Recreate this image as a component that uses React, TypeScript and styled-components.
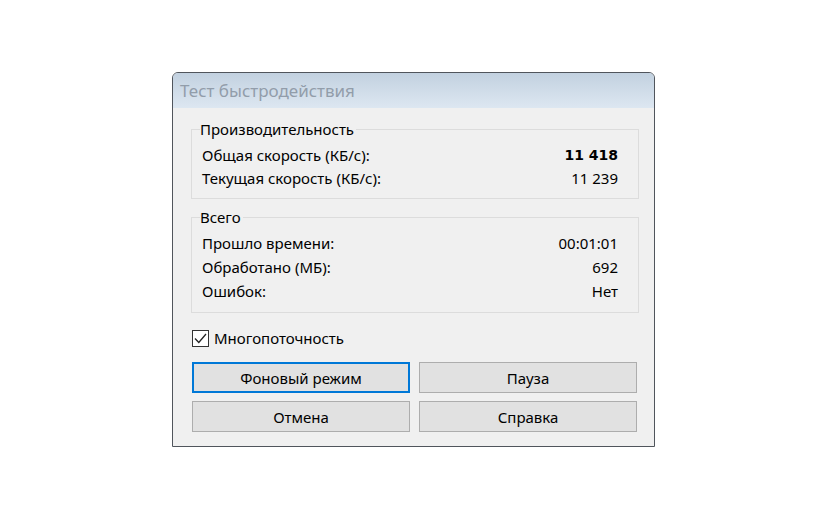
import React from "react";
import styled, { createGlobalStyle } from "styled-components";

const GlobalStyle = createGlobalStyle`
  html, body {
    margin: 0;
    background: #ffffff;
  }
  body {
    font-family: "Noto Sans", "Open Sans", sans-serif;
    color: #000000;
  }
`;

const Page = styled.div`
  width: 839px;
  height: 519px;
  box-sizing: border-box;
  padding: 72px 0 0 172px;
`;

const Window = styled.div`
  width: 483px;
  height: 375px;
  box-sizing: border-box;
  border: 1px solid #50555c;
  border-radius: 6px 6px 0 0;
  background: #f0f0f0;
  display: flex;
  flex-direction: column;
  overflow: hidden;
`;

const TitleBar = styled.div`
  height: 35px;
  flex: none;
  display: flex;
  align-items: center;
  padding-left: 7px;
  background: linear-gradient(#c2d1e0, #dde7f1);
  color: #929daa;
  font-size: 17px;
`;

const Body = styled.div`
  flex: 1;
  display: flex;
  flex-direction: column;
  padding: 11px 15px 12px 18px;
`;

const GroupBox = styled.fieldset<{ $gap?: number }>`
  margin: 0 0 ${(p) => p.$gap ?? 0}px 0;
  padding: 4px 20px 9px 10px;
  border: 1px solid #dcdcdc;
  min-width: 0;
`;

const Legend = styled.legend`
  margin-left: -2px;
  padding: 0 2px 0 0;
  font-size: 15px;
  line-height: 20px;
`;

const Row = styled.div<{ $h: number }>`
  display: flex;
  justify-content: space-between;
  align-items: center;
  height: ${(p) => p.$h}px;
  font-size: 15px;
`;

const Value = styled.span<{ $bold?: boolean }>`
  font-weight: ${(p) => (p.$bold ? 700 : 400)};
  ${(p) => (p.$bold ? `font-family: "DejaVu Sans", "Noto Sans", sans-serif; font-size: 14px;` : "")}
`;

const CheckRow = styled.label`
  display: flex;
  align-items: center;
  gap: 5px;
  height: 20px;
  margin: 15px 0 14px 1px;
  font-size: 15px;
`;

const Box = styled.span`
  width: 17px;
  height: 17px;
  box-sizing: border-box;
  border: 1px solid #333333;
  background: #ffffff;
  display: flex;
  align-items: center;
  justify-content: center;
`;

const Buttons = styled.div`
  display: grid;
  grid-template-columns: 218px 218px;
  column-gap: 9px;
  row-gap: 8px;
  margin-left: 1px;
`;

const Button = styled.button<{ $focused?: boolean }>`
  height: 31px;
  box-sizing: border-box;
  margin: 0;
  padding: 0;
  background: #e1e1e1;
  border: ${(p) => (p.$focused ? "2px solid #0078d7" : "1px solid #adadad")};
  font-family: inherit;
  font-size: 15px;
  color: #000000;
`;

const perf = [
  { label: "Общая скорость (КБ/с):", value: "11 418", bold: true },
  { label: "Текущая скорость (КБ/с):", value: "11 239" },
];

const total = [
  { label: "Прошло времени:", value: "00:01:01" },
  { label: "Обработано (МБ):", value: "692" },
  { label: "Ошибок:", value: "Нет" },
];

export default function App() {
  return (
    <Page>
      <GlobalStyle />
      <Window>
        <TitleBar>Тест быстродействия</TitleBar>
        <Body>
          <GroupBox $gap={8}>
            <Legend>Производительность</Legend>
            {perf.map((r) => (
              <Row key={r.label} $h={23}>
                <span>{r.label}</span>
                <Value $bold={r.bold}>{r.value}</Value>
              </Row>
            ))}
          </GroupBox>
          <GroupBox>
            <Legend>Всего</Legend>
            {total.map((r) => (
              <Row key={r.label} $h={24}>
                <span>{r.label}</span>
                <Value>{r.value}</Value>
              </Row>
            ))}
          </GroupBox>
          <CheckRow>
            <Box>
              <svg width="13" height="11" viewBox="0 0 13 11">
                <path d="M1 5.5 L4.8 9.5 L12 1" fill="none" stroke="#222" strokeWidth="1.3" />
              </svg>
            </Box>
            Многопоточность
          </CheckRow>
          <Buttons>
            <Button $focused>Фоновый режим</Button>
            <Button>Пауза</Button>
            <Button>Отмена</Button>
            <Button>Справка</Button>
          </Buttons>
        </Body>
      </Window>
    </Page>
  );
}
